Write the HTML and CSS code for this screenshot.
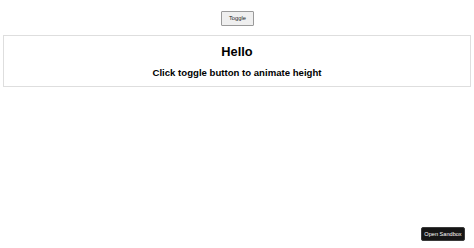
FILE: index.html
```html
<!DOCTYPE html>
<html>
<head>
<meta charset="utf-8">
<link rel="stylesheet" href="styles.css">
</head>
<body>
<div class="app">
  <div class="toolbar">
    <button class="toggle">Toggle</button>
  </div>
  <div class="panel">
    <h1 class="title">Hello</h1>
    <h2 class="subtitle">Click toggle button to animate height</h2>
  </div>
</div>
<a class="sandbox">Open Sandbox</a>
</body>
</html>
```
FILE: styles.css
```css
html, body {
  margin: 0;
  padding: 0;
  background: #ffffff;
  font-family: "Liberation Sans", Arial, sans-serif;
  color: #000000;
  width: 474px;
  height: 248px;
  overflow: hidden;
}
.app {
  padding: 11px 3px 0 3px;
}
.toolbar {
  display: flex;
  justify-content: center;
  padding-left: 1px;
}
.toggle {
  width: 33px;
  height: 15px;
  padding: 0;
  margin: 0;
  border: 1px solid #9a9a9a;
  border-radius: 1px;
  background: #efefef;
  font-family: "Liberation Sans", Arial, sans-serif;
  font-size: 5.8px;
  color: #222;
  line-height: 13px;
}
.panel {
  margin-top: 9px;
  border: 1px solid #dedede;
  box-sizing: border-box;
  height: 52px;
  text-align: center;
  display: flex;
  flex-direction: column;
  align-items: center;
}
.title {
  margin: 8px 0 0 0;
  font-size: 12.8px;
  line-height: 15px;
  font-weight: bold;
}
.subtitle {
  margin: 8px 0 0 0;
  font-size: 9.6px;
  line-height: 12px;
  font-weight: bold;
}
.sandbox {
  position: absolute;
  left: 421px;
  top: 227px;
  width: 44px;
  height: 14px;
  box-sizing: border-box;
  background: #151515;
  border: 1px solid #3a3a3a;
  border-radius: 2px;
  color: #ffffff;
  font-size: 5.6px;
  line-height: 12px;
  text-align: center;
  white-space: nowrap;
}
```
